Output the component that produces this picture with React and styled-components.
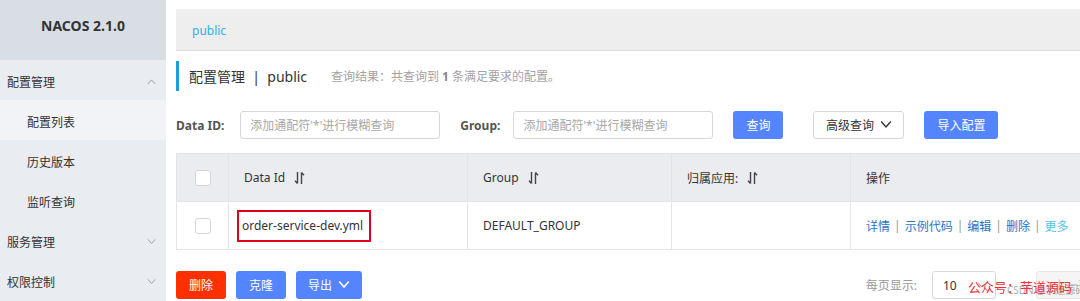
import React from "react";
import styled, { createGlobalStyle } from "styled-components";

const GlobalStyle = createGlobalStyle`
  html, body {
    margin: 0;
    padding: 0;
    background: #fff;
    overflow: hidden;
  }
  body {
    font-family: "Noto Sans", "Noto Sans CJK SC", sans-serif;
    font-size: 12px;
    color: #333;
  }
  * { box-sizing: border-box; }
`;

const Page = styled.div`
  position: relative;
  display: flex;
  width: 1080px;
  height: 301px;
  overflow: hidden;
`;

const Sidebar = styled.div`
  width: 166px;
  flex-shrink: 0;
  background: #e9ecf1;
  display: flex;
  flex-direction: column;
`;

const Brand = styled.div`
  height: 60px;
  background: #d9dee5;
  display: flex;
  align-items: center;
  justify-content: center;
  font-weight: 700;
  font-size: 14px;
  color: #333;
  padding-bottom: 10px;
`;

const MenuItem = styled.div`
  height: 40px;
  display: flex;
  align-items: center;
  justify-content: space-between;
  padding: 3px 10px 0 ${(p) => (p.$sub ? "27px" : "7px")};
  background: ${(p) => (p.$active ? "#f2f3f7" : "transparent")};
  font-size: 12px;
  color: #333;
`;

const Main = styled.div`
  flex-shrink: 0;
  width: 1004px;
  padding: 9px 0 0 10px;
  display: flex;
  flex-direction: column;
`;

const Breadcrumb = styled.div`
  height: 42px;
  background: #eeeeee;
  border-bottom: 1px solid #dcdcdc;
  display: flex;
  align-items: center;
  padding: 2px 0 0 16px;
  color: #2bb3dc;
  font-size: 12px;
`;

const TitleRow = styled.div`
  margin-top: 10px;
  height: 30px;
  border-left: 3px solid #1aa2d8;
  display: flex;
  align-items: center;
  padding-left: 10px;
`;

const Title = styled.span`
  font-size: 14px;
  color: #333;
  margin-right: 24px;
`;

const Summary = styled.span`
  font-size: 12px;
  color: #a3a3a3;
  b { color: #888; margin: 0 3px; }
`;

const FilterRow = styled.div`
  margin-top: 20px;
  height: 28px;
  display: flex;
  align-items: center;
`;

const Label = styled.span`
  font-weight: 700;
  font-size: 12px;
  color: #555;
  margin-right: ${(p) => p.$gap || "16px"};
`;

const Input = styled.div`
  width: 200px;
  height: 28px;
  border: 1px solid #d6d8de;
  border-radius: 3px;
  display: flex;
  align-items: center;
  padding-left: 9px;
  color: #a8a8a8;
  font-size: 12px;
  margin-right: ${(p) => p.$gap || "0"};
`;

const Button = styled.div`
  height: 28px;
  width: ${(p) => p.$w || "50px"};
  margin-right: ${(p) => p.$gap || "0"};
  border-radius: 3px;
  display: flex;
  align-items: center;
  justify-content: center;
  gap: 6px;
  font-size: 12px;
  background: ${(p) =>
    p.$kind === "danger" ? "#ff3000" : p.$kind === "plain" ? "#fff" : "#5584ff"};
  color: ${(p) => (p.$kind === "plain" ? "#333" : "#fff")};
  border: 1px solid
    ${(p) => (p.$kind === "plain" ? "#d6d8de" : "transparent")};
`;

const Table = styled.div`
  margin-top: 14px;
  width: 994px;
  border: 1px solid #e3e4e8;
  border-right: none;
`;

const Row = styled.div`
  display: grid;
  grid-template-columns: 51px 239px 204px 179px 1fr;
  height: ${(p) => (p.$head ? "48px" : "47px")};
  background: ${(p) => (p.$head ? "#ebecf0" : "#fff")};
  border-bottom: ${(p) => (p.$head ? "1px solid #e3e4e8" : "none")};
`;

const Cell = styled.div`
  display: flex;
  align-items: center;
  padding-left: ${(p) => (p.$check ? "0" : "15px")};
  justify-content: ${(p) => (p.$check ? "center" : "flex-start")};
  border-left: ${(p) => (p.$first ? "none" : "1px solid #e3e4e8")};
  font-size: 12px;
  color: #333;
  gap: 9px;
`;

const Checkbox = styled.span`
  width: 16px;
  height: 16px;
  border: 1px solid #d4d6dc;
  border-radius: 3px;
  background: #fff;
`;

const Highlight = styled.span`
  border: 2px solid #e0001b;
  padding: 5px 6px 6px 3px;
  margin-left: -7px;
`;

const Links = styled.div`
  display: flex;
  align-items: center;
  gap: 4px;
  font-size: 12px;
`;

const Link = styled.span`
  color: ${(p) => (p.$light ? "#4fc3ea" : "#2c74c8")};
`;

const Sep = styled.span`
  color: #999;
`;

const Footer = styled.div`
  margin-top: 21px;
  height: 28px;
  display: flex;
  align-items: center;
`;

const PageSize = styled.div`
  margin-left: auto;
  display: flex;
  align-items: center;
  color: #999;
  font-size: 12px;
`;

const Select = styled.div`
  width: 64px;
  height: 28px;
  margin-left: 15px;
  border: 1px solid #d6d8de;
  border-radius: 3px;
  display: flex;
  align-items: center;
  justify-content: space-between;
  padding: 0 8px 0 10px;
  color: #333;
`;

const Pager = styled.div`
  width: 134px;
  height: 28px;
  margin-left: 40px;
  background: #f5f5f5;
  border: 1px solid #e6e6e6;
  border-radius: 3px;
  display: flex;
  align-items: center;
  padding-left: 10px;
  gap: 4px;
  color: #c8c8c8;
`;

const Watermark = styled.div`
  position: absolute;
  left: 968px;
  top: 277px;
  font-size: 13px;
  color: #f0323c;
  white-space: nowrap;
`;

const WatermarkGray = styled.div`
  position: absolute;
  left: 1007px;
  top: 282px;
  font-size: 10px;
  color: rgba(140, 140, 140, 0.75);
  white-space: nowrap;
`;

const Chevron = ({ up, size = 9, color = "#999", stroke = 1 }) => (
  <svg width={size} height={size * 0.6} viewBox="0 0 10 6">
    <path
      d={up ? "M1 5.5 L5 1 L9 5.5" : "M1 0.5 L5 5 L9 0.5"}
      fill="none"
      stroke={color}
      strokeWidth={stroke}
    />
  </svg>
);

const SortIcon = () => (
  <svg width="11" height="14" viewBox="0 0 11 14">
    <path d="M3.5 1 V12.5 M3.5 12.5 L1 9.8" fill="none" stroke="#444" strokeWidth="1.4" />
    <path d="M7.5 13 V1.5 M7.5 1.5 L10 4.2" fill="none" stroke="#444" strokeWidth="1.4" />
  </svg>
);

const menu = [
  { label: "配置管理", arrow: "up" },
  { label: "配置列表", sub: true, active: true },
  { label: "历史版本", sub: true },
  { label: "监听查询", sub: true },
  { label: "服务管理", arrow: "down" },
  { label: "权限控制", arrow: "down" },
];

export default function App() {
  return (
    <Page>
      <GlobalStyle />
      <Sidebar>
        <Brand>NACOS 2.1.0</Brand>
        {menu.map((m) => (
          <MenuItem key={m.label} $sub={m.sub} $active={m.active}>
            <span>{m.label}</span>
            {m.arrow && <Chevron up={m.arrow === "up"} />}
          </MenuItem>
        ))}
      </Sidebar>
      <Main>
        <Breadcrumb>public</Breadcrumb>
        <TitleRow>
          <Title>配置管理 &nbsp;|&nbsp; public</Title>
          <Summary>
            查询结果：共查询到<b>1</b>条满足要求的配置。
          </Summary>
        </TitleRow>
        <FilterRow>
          <Label>Data ID:</Label>
          <Input $gap="20px">添加通配符'*'进行模糊查询</Input>
          <Label $gap="13px">Group:</Label>
          <Input $gap="20px">添加通配符'*'进行模糊查询</Input>
          <Button $w="50px" $gap="30px">查询</Button>
          <Button $kind="plain" $w="91px" $gap="20px">
            高级查询 <Chevron size={12} color="#333" stroke={1.2} />
          </Button>
          <Button $w="74px">导入配置</Button>
        </FilterRow>
        <Table>
          <Row $head>
            <Cell $check $first>
              <Checkbox />
            </Cell>
            <Cell>
              Data Id <SortIcon />
            </Cell>
            <Cell>
              Group <SortIcon />
            </Cell>
            <Cell>
              归属应用: <SortIcon />
            </Cell>
            <Cell>操作</Cell>
          </Row>
          <Row>
            <Cell $check $first>
              <Checkbox />
            </Cell>
            <Cell>
              <Highlight>order-service-dev.yml</Highlight>
            </Cell>
            <Cell>DEFAULT_GROUP</Cell>
            <Cell />
            <Cell>
              <Links>
                <Link>详情</Link>
                <Sep>|</Sep>
                <Link>示例代码</Link>
                <Sep>|</Sep>
                <Link>编辑</Link>
                <Sep>|</Sep>
                <Link>删除</Link>
                <Sep>|</Sep>
                <Link $light>更多</Link>
              </Links>
            </Cell>
          </Row>
        </Table>
        <Footer>
          <Button $kind="danger" $w="50px" $gap="10px">删除</Button>
          <Button $w="50px" $gap="10px">克隆</Button>
          <Button $w="66px">
            导出 <Chevron size={12} color="#fff" stroke={1.3} />
          </Button>
          <PageSize>
            每页显示:
            <Select>
              10 <Chevron size={10} color="#999" />
            </Select>
            <Pager>‹ 上一页</Pager>
          </PageSize>
        </Footer>
      </Main>
      <WatermarkGray>CSDN @芋道源码</WatermarkGray>
      <Watermark>公众号：芋道源码</Watermark>
    </Page>
  );
}
